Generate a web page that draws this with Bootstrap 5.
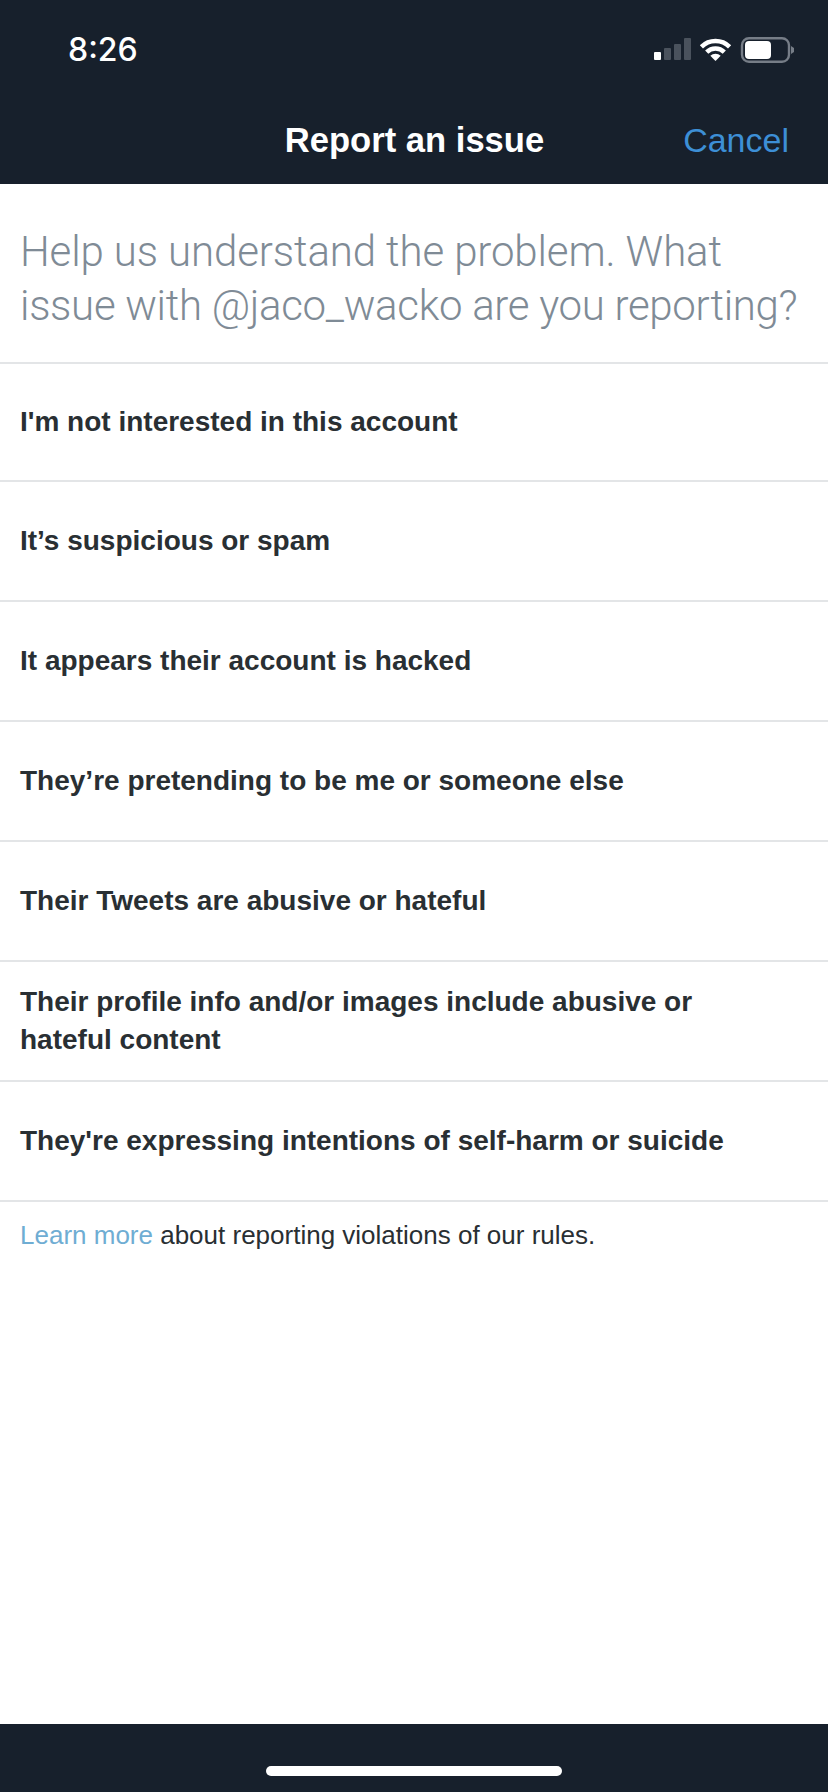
<!DOCTYPE html>
<html lang="en">
<head>
    <meta charset="UTF-8">
    <meta name="viewport" content="width=device-width, initial-scale=1.0">
    <title>Report an issue</title>
    <link href="https://cdn.jsdelivr.net/npm/bootstrap@5.3.0/dist/css/bootstrap.min.css" rel="stylesheet">
    <style>
        body {
            font-family: "Liberation Sans", Arial, sans-serif;
            background: #fff;
        }
        .phone-screen {
            height: 1792px;
        }
        .top-bar {
            background: #17202c;
            height: 184px;
        }
        .status-row {
            height: 100px;
            padding: 0 34px 0 68px;
        }
        .status-time {
            color: #fff;
            font-family: Inter, sans-serif;
            font-size: 32px;
            font-weight: 500;
        }
        .title-row {
            height: 84px;
            padding: 0 39px 2px 40px;
        }
        .title-side {
            flex: 1 1 0;
            padding-bottom: 2px;
        }
        .report-title {
            color: #fff;
            font-size: 34.6px;
            font-weight: 700;
            margin: 0;
        }
        .cancel-link {
            color: #3d8fd6;
            font-size: 34px;
            text-decoration: none;
        }
        .prompt-text {
            color: #7f8b96;
            font-family: Roboto, sans-serif;
            font-size: 42px;
            font-weight: 300;
            letter-spacing: -0.12px;
            line-height: 54px;
            height: 180px;
            padding: 41px 20px 0;
            margin: 0;
            border-bottom: 2px solid #e3e5e7;
        }
        .prompt-second {
            letter-spacing: -0.3px;
        }
        .report-list .list-group-item {
            height: 120px;
            padding: 0 20px;
            display: flex;
            align-items: center;
            color: #292f33;
            font-size: 28px;
            font-weight: 700;
            line-height: 38px;
            border-color: #e3e5e7;
            border-style: solid;
            border-width: 0 0 2px;
        }
        .report-list .list-group-item:first-child {
            height: 118px;
        }
        .report-list .list-group-item:last-child {
            border-bottom-width: 2px;
        }
        .learn-note {
            color: #292f33;
            font-size: 26px;
            padding: 14px 20px 0;
            margin: 0;
        }
        .learn-note a {
            color: #6fadd3;
            text-decoration: none;
        }
        .bottom-bar {
            background: #17202c;
            height: 68px;
        }
        .home-pill {
            background: #fff;
            width: 296px;
            height: 10px;
            border-radius: 5px;
            margin-top: 42px;
        }
    </style>
</head>
<body>
    <div class="phone-screen d-flex flex-column">
        <header class="top-bar">
            <div class="status-row d-flex align-items-center justify-content-between">
                <span class="status-time">8:26</span>
                <svg width="142" height="26" viewBox="0 0 142 26" aria-hidden="true">
                    <rect x="2" y="15" width="7" height="8" rx="1" fill="#fff"/>
                    <rect x="12" y="11" width="7" height="12" rx="1" fill="#4a525d"/>
                    <rect x="22" y="7" width="7" height="16" rx="1" fill="#4a525d"/>
                    <rect x="32" y="1" width="7" height="22" rx="1" fill="#4a525d"/>
                    <path d="M49.4 9.9 A20 20 0 0 1 77.6 9.9" fill="none" stroke="#fff" stroke-width="4.5"/>
                    <path d="M54.7 15.2 A12.5 12.5 0 0 1 72.3 15.2" fill="none" stroke="#fff" stroke-width="4.5"/>
                    <path d="M63.5 24 L58.3 18.8 A7.4 7.4 0 0 1 68.7 18.8 Z" fill="#fff"/>
                    <rect x="90" y="1.2" width="47" height="23.6" rx="7" fill="none" stroke="#767d87" stroke-width="2.4"/>
                    <rect x="93" y="4" width="26" height="18" rx="4" fill="#fff"/>
                    <path d="M139 9 L142 11 V15 L139 17 Z" fill="#767d87"/>
                </svg>
            </div>
            <div class="title-row d-flex align-items-center">
                <div class="title-side"></div>
                <h1 class="report-title">Report an issue</h1>
                <div class="title-side text-end"><a class="cancel-link" href="#">Cancel</a></div>
            </div>
        </header>

        <main class="flex-grow-1">
            <p class="prompt-text">Help us understand the problem. What<br><span class="prompt-second">issue with @jaco_wacko are you reporting?</span></p>
            <div class="list-group list-group-flush report-list">
                <div class="list-group-item">I'm not interested in this account</div>
                <div class="list-group-item">It’s suspicious or spam</div>
                <div class="list-group-item">It appears their account is hacked</div>
                <div class="list-group-item">They’re pretending to be me or someone else</div>
                <div class="list-group-item">Their Tweets are abusive or hateful</div>
                <div class="list-group-item"><span>Their profile info and/or images include abusive or<br>hateful content</span></div>
                <div class="list-group-item">They're expressing intentions of self-harm or suicide</div>
            </div>
            <p class="learn-note"><a href="#">Learn more</a> about reporting violations of our rules.</p>
        </main>

        <footer class="bottom-bar d-flex justify-content-center">
            <div class="home-pill"></div>
        </footer>
    </div>

    <script src="https://cdn.jsdelivr.net/npm/bootstrap@5.3.0/dist/js/bootstrap.bundle.min.js"></script>
</body>
</html>
